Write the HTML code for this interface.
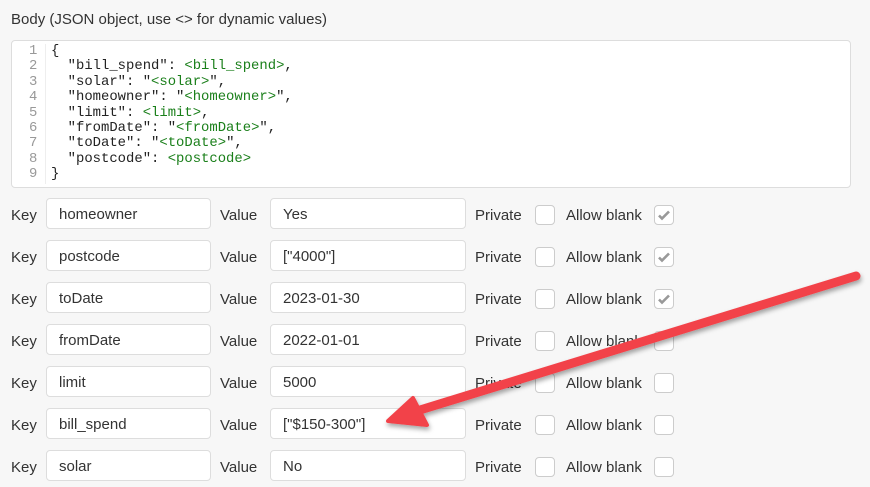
<!DOCTYPE html>
<html><head><style>
body{margin:0;width:870px;height:487px;background:#f7f7f7;font-family:"Liberation Sans",sans-serif;color:#333;position:relative;overflow:hidden}
.t{position:absolute;font-size:15px;line-height:18px;white-space:nowrap}
.in{position:absolute;background:#fff;border:1px solid #ddd;border-radius:4px;height:31px;box-sizing:border-box;font-size:15px;line-height:31px;padding-left:12px;color:#333}
.cb{position:absolute;width:20px;height:20px;background:#fff;border:1px solid #ccc;border-radius:4px;box-sizing:border-box}
.code{position:absolute;left:11px;top:40px;width:840px;height:148px;background:#fff;border:1px solid #ddd;border-radius:4px;box-sizing:border-box}
pre{margin:0;position:absolute;font-family:"Liberation Mono",monospace;font-size:13.9px;line-height:15.4px}
.g{color:#1a7f1a}
</style></head><body>
<div class="t" style="left:11px;top:11px">Body (JSON object, use &lt;&gt; for dynamic values)</div>
<div class="code">
<pre style="left:17px;top:3px;color:#999;text-align:right">1
2
3
4
5
6
7
8
9</pre>
<div style="position:absolute;left:33px;top:3px;width:1px;height:140px;background:#eee"></div>
<pre style="left:39px;top:3px;color:#222">{
  "bill_spend": <span class="g">&lt;bill_spend&gt;</span>,
  "solar": "<span class="g">&lt;solar&gt;</span>",
  "homeowner": "<span class="g">&lt;homeowner&gt;</span>",
  "limit": <span class="g">&lt;limit&gt;</span>,
  "fromDate": "<span class="g">&lt;fromDate&gt;</span>",
  "toDate": "<span class="g">&lt;toDate&gt;</span>",
  "postcode": <span class="g">&lt;postcode&gt;</span>
}</pre>
</div>
<div id="rows"></div>
<script>
var d=[["homeowner","Yes",1],["postcode","[\"4000\"]",1],["toDate","2023-01-30",1],["fromDate","2022-01-01",0],["limit","5000",0],["bill_spend","[\"$150-300\"]",0],["solar","No",0]];
var h="";
d.forEach(function(r,i){var y=198+i*42;
h+='<div class="t" style="left:11px;top:'+(y+9)+'px">Key</div>';
h+='<div class="in" style="left:46px;top:'+y+'px;width:165px">'+r[0]+'</div>';
h+='<div class="t" style="left:220px;top:'+(y+9)+'px">Value</div>';
h+='<div class="in" style="left:270px;top:'+y+'px;width:196px">'+r[1].replace(/</g,"&lt;")+'</div>';
h+='<div class="t" style="left:475px;top:'+(y+9)+'px">Private</div>';
h+='<div class="cb" style="left:535px;top:'+(y+7)+'px"></div>';
h+='<div class="t" style="left:566px;top:'+(y+9)+'px">Allow blank</div>';
h+='<div class="cb" style="left:654px;top:'+(y+7)+'px">'+(r[2]?'<svg width="18" height="18" style="position:absolute;left:0;top:0"><path d="M4 9.5l3 3 7-7" stroke="#999" stroke-width="2.6" fill="none"/></svg>':'')+'</div>';
});
document.getElementById("rows").innerHTML=h;
</script>
<svg width="870" height="487" style="position:absolute;left:0;top:0">
<defs><filter id="s" x="-10%" y="-10%" width="120%" height="130%"><feDropShadow dx="1" dy="3" stdDeviation="2.5" flood-color="#000" flood-opacity="0.35"/></filter></defs>
<g filter="url(#s)" fill="#f2434a" stroke="#f2434a">
<line x1="856" y1="276" x2="420" y2="410" stroke-width="9" stroke-linecap="round"/>
<path d="M388 421 L413 398 L427 425 Z" stroke-width="4" stroke-linejoin="round"/>
</g>
</svg>
</body></html>
